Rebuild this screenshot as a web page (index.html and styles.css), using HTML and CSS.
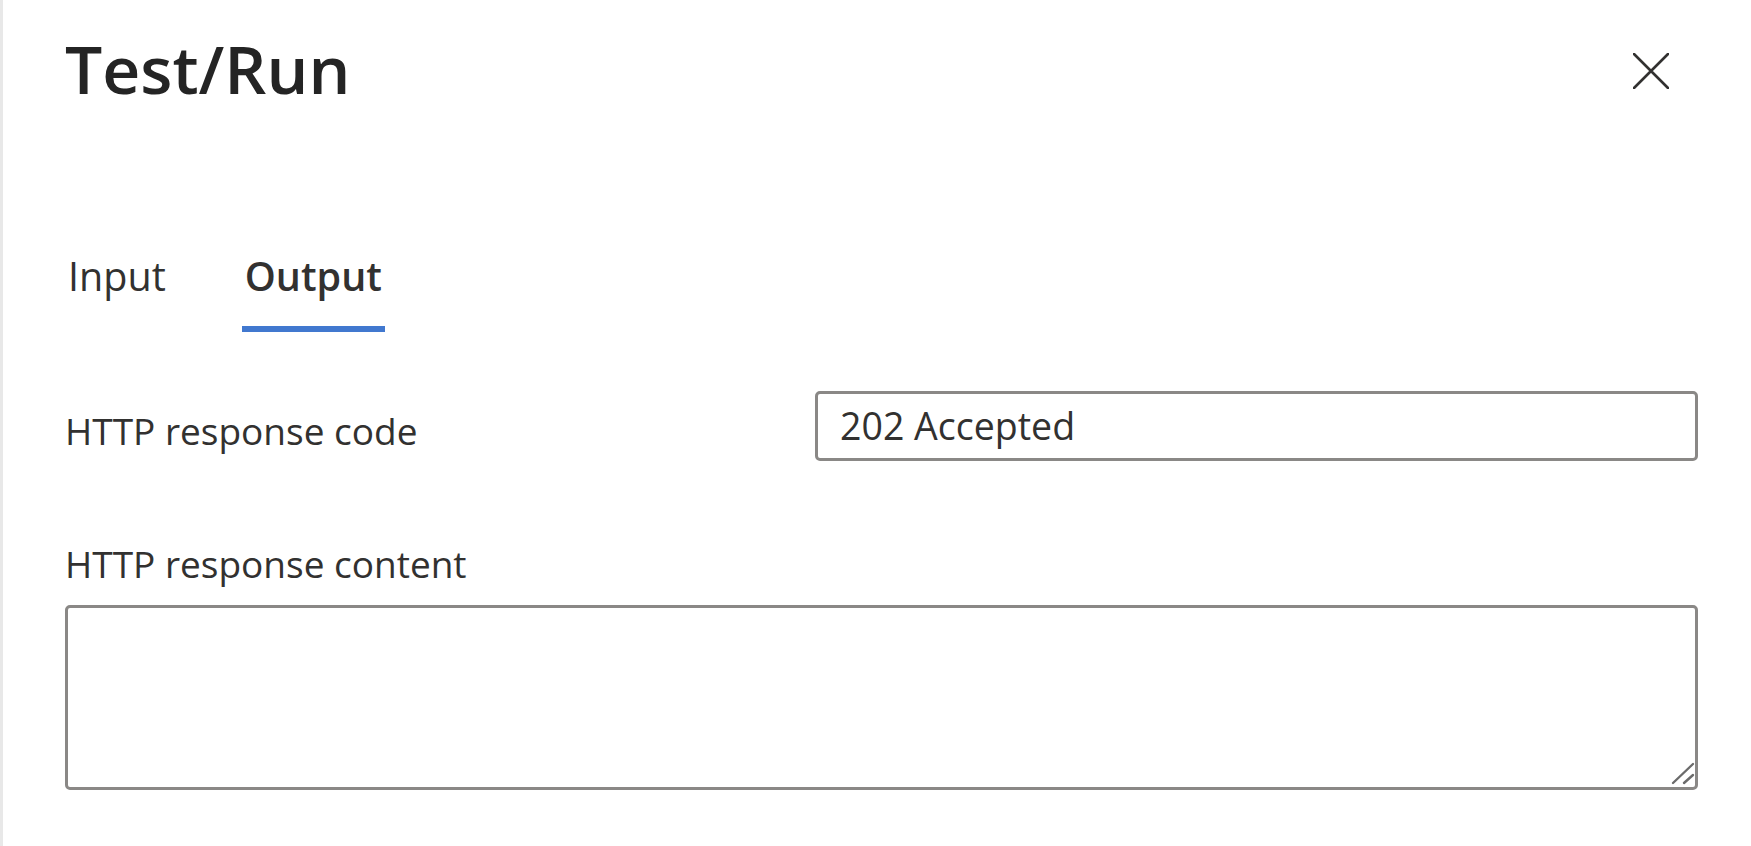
FILE: index.html
```html
<!DOCTYPE html>
<html lang="en">
  <head>
    <meta charset="UTF-8" />
    <meta name="viewport" content="width=device-width, initial-scale=1.0" />
    <title>Test/Run</title>
    <link rel="stylesheet" href="styles.css">
  </head>
  <body>
    <div class="panel">
      <div class="panel-header">
        <h1>Test/Run</h1>
        <button class="close-button" aria-label="Close">
          <svg width="36" height="36" viewBox="0 0 36 36">
            <path d="M1 1 L35 35 M35 1 L1 35" stroke="#323130" stroke-width="2.6" fill="none" stroke-linecap="round" />
          </svg>
        </button>
      </div>

      <div class="tabs">
        <button class="tab">Input</button>
        <button class="tab active">Output</button>
      </div>

      <div class="field-row">
        <label class="field-label" for="response-code">HTTP response code</label>
        <input id="response-code" class="text-input" type="text" value="202 Accepted" readonly>
      </div>

      <div class="field">
        <label class="field-label" for="response-content">HTTP response content</label>
        <div class="textarea-wrap">
          <textarea id="response-content" class="text-area" readonly></textarea>
          <svg class="resize-grip" width="30" height="30" viewBox="0 0 30 30">
            <path d="M5 23 L25 4 M16 23 L25 15" stroke="#6b6b6b" stroke-width="2.4" fill="none" stroke-linecap="round" />
          </svg>
        </div>
      </div>
    </div>
  </body>
</html>
```

FILE: styles.css
```css
:root {
  --text-color: #323130;
  --title-color: #242424;
  --border-color: #8a8886;
  --accent-color: #4178cf;
  --edge-color: #e8e8e8;
}

body {
  margin: 0;
  font-family: 'Open Sans', 'Noto Sans', sans-serif;
  color: var(--text-color);
  background-color: white;
}

.panel {
  min-height: 100vh;
  box-sizing: border-box;
  border-left: 3px solid var(--edge-color);
  padding: 0 53px 0 62px;
}

.panel-header {
  display: flex;
  justify-content: space-between;
  align-items: flex-start;
}

h1 {
  margin: 34px 0 0 0;
  font-size: 66px;
  line-height: 68px;
  font-weight: 600;
  color: var(--title-color);
}

.close-button {
  margin: 53px 29px 0 0;
  padding: 0;
  border: none;
  background: none;
  line-height: 0;
  cursor: pointer;
}

.tabs {
  display: flex;
  gap: 73px;
  margin-top: 155px;
}

.tab {
  padding: 0 3px 29px 3px;
  border: none;
  border-bottom: 6px solid transparent;
  background: none;
  font-family: inherit;
  font-size: 39.5px;
  line-height: 39.5px;
  color: var(--text-color);
  cursor: pointer;
}

.tab.active {
  font-weight: 600;
  border-bottom-color: var(--accent-color);
}

.field-row {
  display: grid;
  grid-template-columns: 750px 1fr;
  align-items: start;
  margin-top: 59px;
}

.field-label {
  display: block;
  font-size: 37px;
  line-height: 37px;
}

.field-row .field-label {
  padding-top: 21px;
}

.text-input {
  height: 70px;
  box-sizing: border-box;
  margin: 0;
  padding: 0 22px;
  border: 3px solid var(--border-color);
  border-radius: 5px;
  font-family: inherit;
  font-size: 37.5px;
  color: var(--text-color);
  outline: none;
}

.field {
  margin-top: 84px;
}

.textarea-wrap {
  position: relative;
  margin-top: 23px;
  line-height: 0;
}

.text-area {
  width: 100%;
  height: 185px;
  box-sizing: border-box;
  margin: 0;
  border: 3px solid var(--border-color);
  border-radius: 5px;
  resize: none;
  font-family: inherit;
  font-size: 37px;
  outline: none;
}

.resize-grip {
  position: absolute;
  right: 0;
  bottom: 0;
}
```
